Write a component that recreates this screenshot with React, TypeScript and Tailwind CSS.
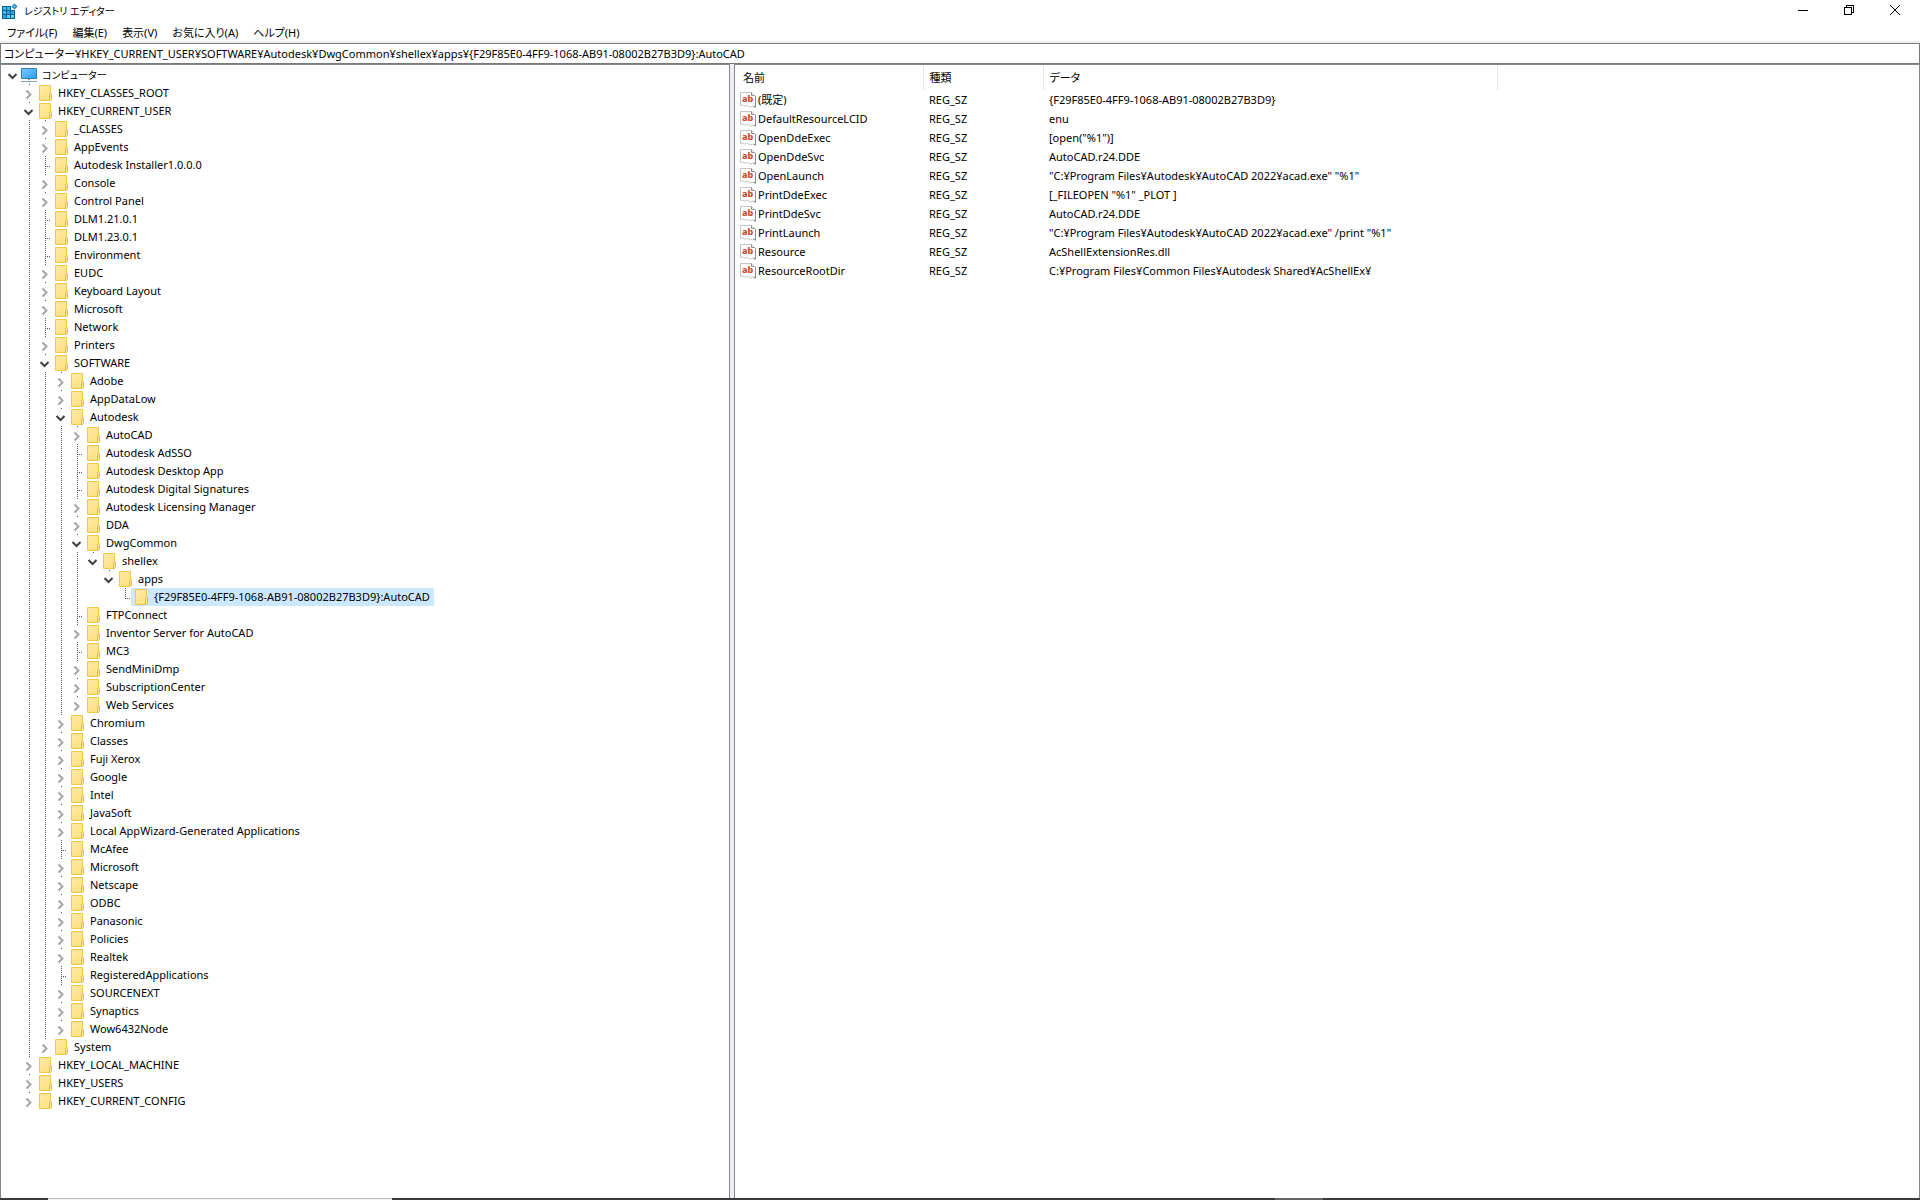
import { useState } from "react";

type KeyNode = {
  name: string;
  closed?: boolean;
  children?: KeyNode[];
};

const leaf = (name: string): KeyNode => ({ name });
const closed = (name: string): KeyNode => ({ name, closed: true });

const SELECTED = "{F29F85E0-4FF9-1068-AB91-08002B27B3D9}:AutoCAD";
const ADDRESS =
  "コンピューター¥HKEY_CURRENT_USER¥SOFTWARE¥Autodesk¥DwgCommon¥shellex¥apps¥" +
  SELECTED;

const menus = ["ファイル(F)", "編集(E)", "表示(V)", "お気に入り(A)", "ヘルプ(H)"];

const tree: KeyNode = {
  name: "コンピューター",
  children: [
    closed("HKEY_CLASSES_ROOT"),
    {
      name: "HKEY_CURRENT_USER",
      children: [
        closed("_CLASSES"),
        closed("AppEvents"),
        leaf("Autodesk Installer1.0.0.0"),
        closed("Console"),
        closed("Control Panel"),
        leaf("DLM1.21.0.1"),
        leaf("DLM1.23.0.1"),
        leaf("Environment"),
        closed("EUDC"),
        closed("Keyboard Layout"),
        closed("Microsoft"),
        leaf("Network"),
        closed("Printers"),
        {
          name: "SOFTWARE",
          children: [
            closed("Adobe"),
            closed("AppDataLow"),
            {
              name: "Autodesk",
              children: [
                closed("AutoCAD"),
                leaf("Autodesk AdSSO"),
                leaf("Autodesk Desktop App"),
                leaf("Autodesk Digital Signatures"),
                closed("Autodesk Licensing Manager"),
                closed("DDA"),
                {
                  name: "DwgCommon",
                  children: [
                    {
                      name: "shellex",
                      children: [{ name: "apps", children: [leaf(SELECTED)] }],
                    },
                  ],
                },
                leaf("FTPConnect"),
                closed("Inventor Server for AutoCAD"),
                leaf("MC3"),
                closed("SendMiniDmp"),
                closed("SubscriptionCenter"),
                closed("Web Services"),
              ],
            },
            closed("Chromium"),
            closed("Classes"),
            closed("Fuji Xerox"),
            closed("Google"),
            closed("Intel"),
            closed("JavaSoft"),
            closed("Local AppWizard-Generated Applications"),
            leaf("McAfee"),
            closed("Microsoft"),
            closed("Netscape"),
            closed("ODBC"),
            closed("Panasonic"),
            closed("Policies"),
            closed("Realtek"),
            leaf("RegisteredApplications"),
            closed("SOURCENEXT"),
            closed("Synaptics"),
            closed("Wow6432Node"),
          ],
        },
        closed("System"),
      ],
    },
    closed("HKEY_LOCAL_MACHINE"),
    closed("HKEY_USERS"),
    closed("HKEY_CURRENT_CONFIG"),
  ],
};

const values = [
  ["(既定)", "{F29F85E0-4FF9-1068-AB91-08002B27B3D9}"],
  ["DefaultResourceLCID", "enu"],
  ["OpenDdeExec", '[open("%1")]'],
  ["OpenDdeSvc", "AutoCAD.r24.DDE"],
  ["OpenLaunch", '"C:¥Program Files¥Autodesk¥AutoCAD 2022¥acad.exe" "%1"'],
  ["PrintDdeExec", '[_FILEOPEN "%1" _PLOT ]'],
  ["PrintDdeSvc", "AutoCAD.r24.DDE"],
  ["PrintLaunch", '"C:¥Program Files¥Autodesk¥AutoCAD 2022¥acad.exe" /print "%1"'],
  ["Resource", "AcShellExtensionRes.dll"],
  ["ResourceRootDir", "C:¥Program Files¥Common Files¥Autodesk Shared¥AcShellEx¥"],
];

const AppIcon = () => (
  <svg width="16" height="16" viewBox="0 0 16 16" aria-hidden="true">
    <path d="M0 3h9v4h4v9H0z" fill="#0a5f94" />
    <g fill="#35c0f0">
      <path d="M1 4h3v3H1zM5 4h3v3H5zM1 8h3v3H1z" />
      <path d="M5 8h3v3H5zM9 8h3v3H9zM1 12h3v3H1z" fill="#22a7e0" />
      <path d="M5 12h3v3H5zM9 12h3v3H9z" fill="#5cd3fa" />
    </g>
    <path d="M12.500.500 15.500 3.500 12.500 6.500 9.500 3.500z" fill="#1584bd" />
    <path d="M12.500 2 14 3.500 12.500 5 11 3.500z" fill="#4cc9f5" />
  </svg>
);

const ComputerIcon = () => (
  <svg width="16" height="16" viewBox="0 0 16 16" aria-hidden="true">
    <defs>
      <linearGradient id="screen" x1="0" y1="0" x2="1" y2="1">
        <stop offset="0" stopColor="#7ccbff" />
        <stop offset="1" stopColor="#2a9df4" />
      </linearGradient>
    </defs>
    <path d="M.500 1.500h15v10H.500z" fill="url(#screen)" stroke="#2f7fb8" />
    <path d="M7 12h2v1H7z" fill="#8d9aa5" />
    <path d="M0 14h16v1H0z" fill="#8a9dae" />
  </svg>
);

const FolderIcon = () => (
  <svg width="13" height="16" viewBox="0 0 13 16" aria-hidden="true">
    <defs>
      <linearGradient id="folder" x1="0" y1="0" x2="1" y2="1">
        <stop offset="0" stopColor="#ffeaa5" />
        <stop offset="1" stopColor="#ffe07c" />
      </linearGradient>
    </defs>
    <path d="M.500.500h11v15H.500z" fill="url(#folder)" stroke="#ecc84c" />
    <path d="M10.500 9.500 11.500 8.500h1v6l-1 1h-1z" fill="#ffe48c" stroke="#e8c040" />
  </svg>
);

const StringIcon = () => (
  <svg width="16" height="16" viewBox="0 0 16 16" aria-hidden="true">
    <path
      d="M.500.500h11l4 4v11l-3-1.500-2 1-3-1.500-3 .500-2-1-2 .500z"
      fill="#fff"
      stroke="#c4c4c4"
    />
    <path d="M11.500.500v3h3M15.500 4v11l-2-1" fill="none" stroke="#8c8c8c" />
    <text
      x="2"
      y="10"
      fill="#d4472a"
      fontFamily="Noto Sans, sans-serif"
      fontSize="9"
      fontWeight="800"
    >
      ab
    </text>
  </svg>
);

// dotted line drawn through the middle of a tree column
const Line = ({ to = 18, branch = false }) => (
  <svg
    width="16"
    height="18"
    viewBox="0 0 16 18"
    fill="none"
    stroke="#555"
    strokeDasharray="1 1"
    shapeRendering="crispEdges"
    className="shrink-0"
    aria-hidden="true"
  >
    {to > 0 && <path d={`M10.500 0V${to}`} />}
    {branch && <path d="M12 10.500h4" />}
  </svg>
);

const Chevron = ({ open, top }: { open: boolean; top: boolean }) => (
  <svg width="16" height="18" viewBox="0 0 16 18" fill="none" aria-hidden="true">
    {top && <path d="M10 0h1v1h-1z" fill="#555" />}
    {open ? (
      <path d="m5.500 8 4 4 4-4" stroke="#404040" strokeWidth="2" />
    ) : (
      <path d="m7.500 6.500 4 4-4 4" stroke="#a6a6a6" strokeWidth="2" />
    )}
  </svg>
);

type RowProps = { node: KeyNode; guides: boolean[]; last: boolean; root?: boolean };

const TreeRow = ({ node, guides, last, root = false }: RowProps) => {
  const [open, setOpen] = useState(!!node.children);
  const selected = node.name === SELECTED;
  const hasChildren = !!node.children || !!node.closed;

  return (
    <li role="treeitem" aria-selected={selected} aria-expanded={hasChildren ? open : undefined}>
      <div className="flex h-[18px] items-center">
        {guides.map((on, i) => (
          <Line key={i} to={on ? 18 : 0} />
        ))}
        {hasChildren ? (
          <button
            type="button"
            aria-label={`${open ? "Collapse" : "Expand"} ${node.name}`}
            onClick={() => setOpen(!open)}
            className="shrink-0"
          >
            <Chevron open={open} top={!root} />
          </button>
        ) : (
          <Line to={last ? 11 : 18} branch />
        )}
        {root ? (
          <span className="flex h-[18px] items-center gap-[5px] pl-0.5 text-[10px]">
            <ComputerIcon />
            {node.name}
          </span>
        ) : (
          <span
            className={`flex h-[18px] items-center gap-1.5 whitespace-nowrap px-1 ${
              selected ? "bg-[#cce8ff]" : ""
            }`}
          >
            <FolderIcon />
            {node.name}
          </span>
        )}
      </div>
      {open && node.children && (
        <ul role="group">
          {node.children.map((child, i) => (
            <TreeRow
              key={child.name}
              node={child}
              guides={root ? [false] : [...guides, !last]}
              last={i === node.children!.length - 1}
            />
          ))}
        </ul>
      )}
    </li>
  );
};

const TitleBar = () => (
  <header className="flex h-[22px] items-start justify-between">
    <h1 className="flex h-[22px] items-center gap-1.5 pl-0.5 text-[10px] font-normal">
      <AppIcon />
      レジストリ エディター
    </h1>
    <div className="flex pr-0.5">
      <button type="button" aria-label="Minimize" className="flex h-5 w-[46px] items-center justify-center">
        <svg width="10" height="10" stroke="#000" shapeRendering="crispEdges">
          <path d="M0 5.500h10" />
        </svg>
      </button>
      <button type="button" aria-label="Restore" className="flex h-5 w-[46px] items-center justify-center">
        <svg width="10" height="10" fill="none" stroke="#000" shapeRendering="crispEdges">
          <path d="M.500 2.500h7v7h-7zM2.500 2V.500h7v7H8" />
        </svg>
      </button>
      <button type="button" aria-label="Close" className="flex h-5 w-[46px] items-center justify-center">
        <svg width="10" height="10" stroke="#000">
          <path d="m0 0 10 10M10 0 0 10" />
        </svg>
      </button>
    </div>
  </header>
);

const ValueTable = () => (
  <table className="w-full table-fixed border-collapse whitespace-nowrap text-left">
    <colgroup>
      <col className="w-[188px]" />
      <col className="w-[120px]" />
      <col className="w-[454px]" />
      <col />
    </colgroup>
    <thead>
      <tr className="h-6">
        <th className="border-r border-[#e5e5e5] p-0 pl-2 font-normal">名前</th>
        <th className="border-r border-[#e5e5e5] p-0 pl-1.5 font-normal">種類</th>
        <th className="border-r border-[#e5e5e5] p-0 pl-1.5 font-normal">データ</th>
        <td />
      </tr>
    </thead>
    <tbody>
      {values.map(([name, data]) => (
        <tr key={name} className="h-[19px]">
          <td className="p-0 pl-[5px]">
            <span className="flex items-center gap-0.5">
              <StringIcon />
              {name}
            </span>
          </td>
          <td className="p-0 pl-1.5">REG_SZ</td>
          <td className="p-0 pl-1.5">{data}</td>
          <td />
        </tr>
      ))}
    </tbody>
  </table>
);

export default function App() {
  return (
    <div className="flex min-h-screen flex-col bg-white font-['Noto_Sans','Noto_Sans_CJK_JP',sans-serif] text-[11px] leading-4 text-black [font-feature-settings:'palt']">
      <TitleBar />
      <nav className="flex h-[19px] items-center gap-[15px] pl-[7px] pt-0.5">
        {menus.map((menu) => (
          <button key={menu} type="button">
            {menu}
          </button>
        ))}
      </nav>
      <div className="bg-[#f0f0f0] pt-0.5">
        <input
          type="text"
          aria-label="Address"
          defaultValue={ADDRESS}
          className="block h-[21px] w-full border border-[#7a7a7a] bg-white px-[3px] pb-0.5"
        />
      </div>
      <main className="flex flex-1 bg-[#f0f0f0]">
        <section className="w-[730px] shrink-0 border-x border-t border-[#828790] bg-white pt-px">
          <ul role="tree" aria-label="Registry keys" className="pl-0.5">
            <TreeRow node={tree} guides={[]} last root />
          </ul>
        </section>
        <section className="ml-1 min-w-0 flex-1 border-x border-t border-[#828790] bg-white pt-px">
          <ValueTable />
        </section>
      </main>
      <footer className="flex h-0.5 bg-[#3a393a]">
        <div className="ml-12 w-[344px] border-t border-[#c0c0c0] bg-[#f0f0f0]" />
        <div className="ml-[883px] w-12 bg-[#656465]" />
      </footer>
    </div>
  );
}
